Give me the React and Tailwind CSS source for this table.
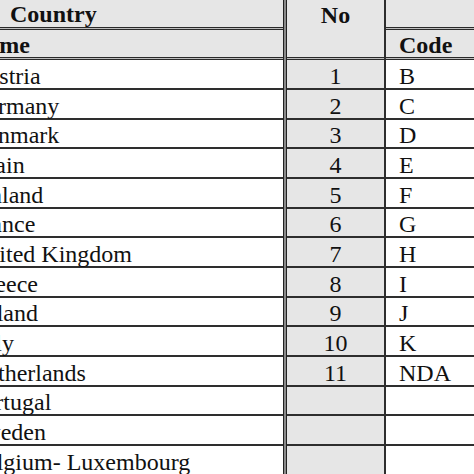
import React from "react";

const rows = [
  ["Austria", "1", "B"],
  ["Germany", "2", "C"],
  ["Denmark", "3", "D"],
  ["Spain", "4", "E"],
  ["Finland", "5", "F"],
  ["France", "6", "G"],
  ["United Kingdom", "7", "H"],
  ["Greece", "8", "I"],
  ["Ireland", "9", "J"],
  ["Italy", "10", "K"],
  ["Netherlands", "11", "NDA"],
  ["Portugal", "", ""],
  ["Sweden", "", ""],
  ["Belgium- Luxembourg", "", ""],
];

const heights = ["h-[30px]", "h-[30px]", "h-[29px]"];

function DoubleH() {
  return (
    <div className="h-[3px] border-y border-[#2a2a2a] bg-[#bdbdbd]" />
  );
}

export default function App() {
  const font = { fontFamily: '"Liberation Serif", "Times New Roman", serif' };
  return (
    <div className="w-[474px] h-[474px] overflow-hidden bg-white text-[#111]" style={font}>
      <div className="flex w-[560px] mt-[-2px] ml-[-40px] text-[24px] leading-none">
        {/* Country column */}
        <div className="flex flex-col w-[323px] shrink-0">
          <div className="h-[29px] bg-[#e6e6e6] flex items-center pl-[50px] pt-[3px] font-bold">Country</div>
          <DoubleH />
          <div className="h-[27px] bg-[#e6e6e6] flex items-center pl-[10px] pt-[3px] font-bold">Name</div>
          <DoubleH />
          {rows.map((r, i) => (
            <div
              key={i}
              className={`${heights[i % 3]} bg-white border-b-2 border-[#2e2e2e] flex items-center pl-[10px] pt-[3px] whitespace-nowrap`}
            >
              {r[0]}
            </div>
          ))}
        </div>
        {/* double vertical line */}
        <div className="w-[4px] shrink-0 bg-[#8a8a8a] border-x border-[#222]" />
        {/* No column */}
        <div className="flex flex-col w-[97px] shrink-0">
          <div className="h-[59px] bg-[#e6e6e6] flex justify-center pt-[5px] font-bold">No</div>
          <DoubleH />
          {rows.map((r, i) => (
            <div
              key={i}
              className={`${heights[i % 3]} bg-[#e6e6e6] border-b-2 border-[#2e2e2e] flex items-center justify-center pt-[3px]`}
            >
              {r[1]}
            </div>
          ))}
        </div>
        {/* single vertical line */}
        <div className="w-[2px] shrink-0 bg-[#2e2e2e]" />
        {/* Code column */}
        <div className="flex flex-col w-[130px] shrink-0">
          <div className="h-[29px] bg-[#e6e6e6]" />
          <DoubleH />
          <div className="h-[27px] bg-[#e6e6e6] flex items-center pl-[13px] pt-[3px] font-bold">Code</div>
          <DoubleH />
          {rows.map((r, i) => (
            <div
              key={i}
              className={`${heights[i % 3]} bg-white border-b-2 border-[#2e2e2e] flex items-center pl-[13px] pt-[3px]`}
            >
              {r[2]}
            </div>
          ))}
        </div>
      </div>
    </div>
  );
}
